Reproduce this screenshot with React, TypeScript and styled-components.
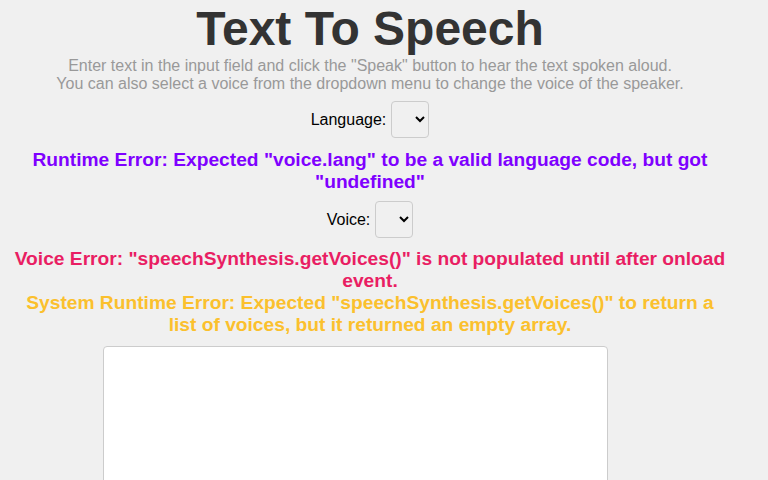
import { createGlobalStyle } from "styled-components";
import styled from "styled-components";

const GlobalStyle = createGlobalStyle`
  html, body {
    margin: 0;
    padding: 0;
    background-color: #f0f0f0;
    font-family: "Liberation Sans", Arial, sans-serif;
  }
`;

type ErrorTextProps = {
  tone: string;
};

const App = () => {
  return (
    <>
      <GlobalStyle />
      <Page>
        <Title>Text To Speech</Title>
        <Description>
          Enter text in the input field and click the "Speak" button to hear the text spoken aloud.
          <br />
          You can also select a voice from the dropdown menu to change the voice of the speaker.
        </Description>
        <Field>
          <label htmlFor="language">Language:</label>
          <Select id="language" />
        </Field>
        <ErrorText tone="#7f00ff">
          Runtime Error: Expected "voice.lang" to be a valid language code, but got "undefined"
        </ErrorText>
        <Field>
          <label htmlFor="voice">Voice:</label>
          <Select id="voice" />
        </Field>
        <ErrorGroup>
          <ErrorText tone="#e91e63">
            Voice Error: "speechSynthesis.getVoices()" is not populated until after onload event.
          </ErrorText>
          <ErrorText tone="#fbc02d">
            System Runtime Error: Expected "speechSynthesis.getVoices()" to return a list of voices, but it returned an empty array.
          </ErrorText>
        </ErrorGroup>
        <TextInput />
      </Page>
    </>
  );
};

const Page = styled.main`
  width: 716px;
  padding: 1px 12px 0;
  display: flex;
  flex-direction: column;
  text-align: center;
`;

const Title = styled.h1`
  margin: 0;
  font-size: 48px;
  line-height: 56px;
  font-weight: bold;
  color: #333;
`;

const Description = styled.p`
  margin: 0;
  font-size: 16px;
  color: #999;
`;

const Field = styled.div`
  margin-top: 8px;
  display: flex;
  justify-content: center;
  align-items: center;
  gap: 5px;
  font-size: 16px;
  color: #000;

  & + & {
    margin-top: 11px;
  }
`;

const Select = styled.select`
  height: 37px;
  padding: 8px;
  font-size: 16px;
  font-family: inherit;
  border: 1px solid #ccc;
  border-radius: 4px;
  background-color: transparent;
`;

const ErrorGroup = styled.div`
  margin-top: 10px;
`;

const ErrorText = styled.h3<ErrorTextProps>`
  margin: 11px 0 0;
  font-size: 19.2px;
  line-height: 22px;
  font-weight: bold;
  color: ${(props) => props.tone};

  ${ErrorGroup} & {
    margin-top: 0;
  }
`;

const TextInput = styled.textarea`
  align-self: flex-start;
  margin: 10px 0 0 91px;
  width: 505px;
  height: 200px;
  box-sizing: border-box;
  background-color: #fff;
  border: 1px solid #ccc;
  border-radius: 4px;
  resize: none;
`;

export default App;
